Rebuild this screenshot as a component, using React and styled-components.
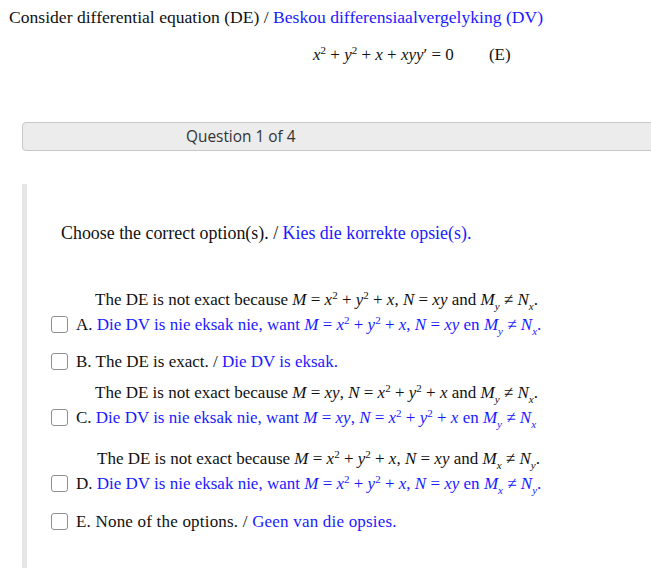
import styled, { createGlobalStyle } from 'styled-components'

const Global = createGlobalStyle`
    html, body {
        margin: 0;
        padding: 0;
        background: #fff;
        overflow: hidden;
    }
    body {
        font-family: "Liberation Serif", "DejaVu Serif", serif;
        color: #111;
    }
`

const Page = styled.div`
    width: 651px;
    height: 568px;
    overflow: hidden;
`

const Intro = styled.div`
    padding: 7px 0 0 9px;
    font-size: 17.6px;
    line-height: 20px;
`

const Af = styled.span`
    color: #1a1aff;
`

const Equation = styled.div`
    display: flex;
    margin: 18px 0 0 313px;
    font-size: 17px;
    line-height: 20px;
    gap: 35px;
`

const Var = styled.i`
    font-style: italic;
`

const Sup = styled.sup`
    font-size: 11px;
    line-height: 0;
    vertical-align: 6px;
`

const Sub = styled.sub`
    font-size: 11px;
    line-height: 0;
    vertical-align: -5px;
    font-style: italic;
`

const QuestionBar = styled.div`
    margin: 57px 0 0 22px;
    width: 700px;
    height: 27px;
    border: 1px solid #c8c8c8;
    border-radius: 4px;
    background: #ececec;
    box-sizing: content-box;
    padding-left: 163px;
    font-family: "Open Sans", "Noto Sans", sans-serif;
    font-size: 15.4px;
    line-height: 27px;
    color: #333;
`

const Section = styled.section`
    margin: 33px 0 0 22px;
    border-left: 5px solid #e6e6e6;
    height: 400px;
    padding: 39px 0 0 34px;
    font-size: 17px;
`

const Prompt = styled.p`
    margin: 0;
    font-size: 17.9px;
    line-height: 20px;
`

const Options = styled.div`
    display: flex;
    flex-direction: column;
    margin-left: -10px;
`

const Option = styled.label`
    display: grid;
    grid-template-columns: 25px 1fr;
    align-items: end;
    margin-top: ${p => p.$top}px;
    line-height: 25px;
`

const Box = styled.span`
    width: 15px;
    height: 15px;
    border: 1px solid #8f8f8f;
    border-radius: 3px;
    background: #fff;
    margin-bottom: 4px;
`

const English = styled.div`
    padding-left: ${p => p.$indent}px;
`

const Stack = styled.div`
    display: flex;
    flex-direction: column;
`

const Line = styled.div`
    letter-spacing: ${p => p.$spacing || 0}px;
`

const M = ({ children }) => <Var>{children}</Var>

const Sq = ({ v }) => <><Var>{v}</Var><Sup>2</Sup></>

const Msum = () => (
    <><M>M</M> = <Sq v="x" /> + <Sq v="y" /> + <M>x</M></>
)

const Mxy = () => <><M>M</M> = <M>xy</M></>

const Nsum = () => (
    <><M>N</M> = <Sq v="x" /> + <Sq v="y" /> + <M>x</M></>
)

const Nxy = () => <><M>N</M> = <M>xy</M></>

const Neq = ({ a, b, dot }) => (
    <><M>M</M><Sub>{a}</Sub> ≠ <M>N</M><Sub>{b}</Sub>{dot ? '.' : ''}</>
)

const App = () => {
    return (
        <Page>
            <Global />
            <Intro>
                Consider differential equation (DE) / <Af>Beskou differensiaalvergelyking (DV)</Af>
            </Intro>
            <Equation>
                <span><Sq v="x" /> + <Sq v="y" /> + <M>x</M> + <M>xyy</M>′ = 0</span>
                <span>(E)</span>
            </Equation>
            <QuestionBar>Question 1 of 4</QuestionBar>
            <Section>
                <Prompt>
                    Choose the correct option(s). / <Af>Kies die korrekte opsie(s).</Af>
                </Prompt>
                <Options>
                    <Option $top={44}>
                        <Box />
                        <Stack>
                            <English $indent={19}>
                                The DE is not exact because <Msum />, <Nxy /> and <Neq a="y" b="x" dot />
                            </English>
                            <Line>
                                A. <Af>Die DV is nie eksak nie, want <Msum />, <Nxy /> en <Neq a="y" b="x" dot /></Af>
                            </Line>
                        </Stack>
                    </Option>
                    <Option $top={12}>
                        <Box />
                        <Line>B. The DE is exact. / <Af>Die DV is eksak.</Af></Line>
                    </Option>
                    <Option $top={6}>
                        <Box />
                        <Stack>
                            <English $indent={19}>
                                The DE is not exact because <Mxy />, <Nsum /> and <Neq a="y" b="x" dot />
                            </English>
                            <Line>
                                C. <Af>Die DV is nie eksak nie, want <Mxy />, <Nsum /> en <Neq a="y" b="x" /></Af>
                            </Line>
                        </Stack>
                    </Option>
                    <Option $top={16}>
                        <Box />
                        <Stack>
                            <English $indent={21}>
                                The DE is not exact because <Msum />, <Nxy /> and <Neq a="x" b="y" dot />
                            </English>
                            <Line>
                                D. <Af>Die DV is nie eksak nie, want <Msum />, <Nxy /> en <Neq a="x" b="y" dot /></Af>
                            </Line>
                        </Stack>
                    </Option>
                    <Option $top={13}>
                        <Box />
                        <Line $spacing={0.2}>E. None of the options. / <Af>Geen van die opsies.</Af></Line>
                    </Option>
                </Options>
            </Section>
        </Page>
    )
}

export default App
